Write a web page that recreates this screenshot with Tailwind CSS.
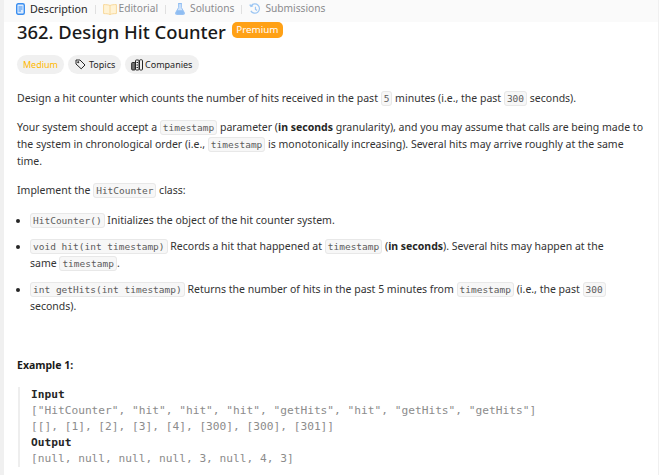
<!DOCTYPE html>
<html><head><meta charset="utf-8"><script src="https://cdn.jsdelivr.net/npm/@tailwindcss/browser@4"></script></head>
<body class="m-0 bg-[#f0f0f0] font-['Noto_Sans',sans-serif]">
<div class="w-[659px] h-[475px] overflow-hidden pl-1 pr-px">
<div class="h-full bg-white">
<div class="h-[22px] bg-[#fafafa] flex items-center pl-[12px] text-[10.200px] text-[#8a8a8e] pb-1">
  <svg class="w-[9px] h-[12px] mr-[5px]" viewBox="0 0 9 12"><rect x="0.700" y="0.700" width="7.600" height="10.600" rx="1.500" fill="#dbeafe" stroke="#3b8ff0" stroke-width="1.400"/><path d="M2.500 4h4M2.500 6h4M2.500 8h2.500" stroke="#3b8ff0"/></svg>
  <span class="text-[#262626] text-[10.700px]">Description</span>
  <span class="w-px h-[9px] bg-[#e0e0e0] ml-[7px] mr-[7px]"></span>
  <svg class="w-[14px] h-[11px] mr-[2px]" viewBox="0 0 14 11" fill="#fff3d6" stroke="#f8d89a"><path d="M7 1.500C5.500.7 3 .6.600.6v9c2.400 0 4.900.1 6.400 1 1.500-.9 4-1 6.400-1v-9C11 .6 8.500.7 7 1.500zM7 1.500v9"/></svg>
  <span>Editorial</span>
  <span class="w-px h-[9px] bg-[#e0e0e0] ml-[7px] mr-[9px]"></span>
  <svg class="w-[10px] h-[12px] mr-[5px]" viewBox="0 0 11 13"><path d="M3.500.5h4M4 .5v4.300L.6 10.800c-.5 1 .1 1.700 1 1.700h7.800c.9 0 1.500-.7 1-1.700L7 4.800V.5z" fill="#cfe3fb" stroke="#8fbdf2"/><path d="M2.200 8h6.600l1.300 3-.6 1H1.500l-.6-1z" fill="#8fbdf2"/></svg>
  <span>Solutions</span>
  <span class="w-px h-[9px] bg-[#e0e0e0] ml-[7px] mr-[7px]"></span>
  <svg class="w-[12px] h-[12px] mr-[4px]" viewBox="0 0 13 12" fill="none" stroke="#9cc6f3" stroke-width="1.300"><path d="M2.300 2.500A5 5 0 1 1 2 8"/><path d="M.800 1.200l1.400 2.200 2.300-.9" fill="#9cc6f3"/><path d="M7 3.500v3l1.800 1"/></svg>
  <span>Submissions</span>
</div>
<div class="pl-[13px] pr-[14px]">
<div class="flex items-start -mt-px h-[22px]">
  <h1 class="text-[18.400px] leading-[22px] font-medium text-[#1a1a1a]">362. Design Hit Counter</h1>
  <span class="ml-[6px] mt-px h-[16px] w-[51px] text-center rounded-[5px] bg-[#ffa116] text-white text-[9.800px] leading-[15px]">Premium</span>
</div>
<div class="flex gap-1 mt-[12px] text-[9px] leading-[19px] h-[19px]">
  <span class="rounded-full bg-[#f0f0f0] w-[47px] text-center text-[#ffb800]">Medium</span>
  <span class="rounded-full bg-[#f0f0f0] w-[53px] pl-[7px] text-[#262626] flex items-center gap-[3px]"><svg class="w-[11px] h-[11px]" viewBox="0 0 11 11" fill="none" stroke="#262626"><path d="M1 1h4l5 5-3.800 3.800L1 5z" stroke-linejoin="round"/><circle cx="3.200" cy="3.200" r=".6" fill="#262626"/></svg>Topics</span>
  <span class="rounded-full bg-[#f0f0f0] w-[74px] pl-[6px] text-[#262626] flex items-center gap-[2px]"><svg class="w-[12px] h-[12px]" viewBox="0 0 12 12" fill="none" stroke="#262626"><rect x=".7" y="3.500" width="3.500" height="7.500" rx=".8" fill="#777"/><rect x="4.500" y="1" width="3.500" height="10" rx=".8"/><rect x="8.500" y=".8" width="3" height="10.200" rx=".8"/><path d="M5.500 3.500h1.500M5.500 6h1.500M5.500 8.500h1.500" /></svg>Companies</span>
</div>
<div class="mt-[16px] text-[10.500px] leading-[16.670px] text-[#333333]">
<p>Design a hit counter which counts the number of hits received in the past <code class="font-['DejaVu_Sans_Mono',monospace] text-[9.500px] leading-none text-[#5c5c5c] bg-[#f7f7f7] border border-[#e8e8e8] rounded-[3px] px-[2px] py-px">5</code> minutes (i.e., the past <code class="font-['DejaVu_Sans_Mono',monospace] text-[9.500px] leading-none text-[#5c5c5c] bg-[#f7f7f7] border border-[#e8e8e8] rounded-[3px] px-[2px] py-px">300</code> seconds).</p>
<p class="mt-[12.670px]">Your system should accept a <code class="font-['DejaVu_Sans_Mono',monospace] text-[9.500px] leading-none text-[#5c5c5c] bg-[#f7f7f7] border border-[#e8e8e8] rounded-[3px] px-[2px] py-px">timestamp</code> parameter (<strong class="font-bold text-[#262626]">in seconds</strong> granularity), and you may assume that calls are being made to the system in chronological order (i.e., <code class="font-['DejaVu_Sans_Mono',monospace] text-[9.500px] leading-none text-[#5c5c5c] bg-[#f7f7f7] border border-[#e8e8e8] rounded-[3px] px-[2px] py-px">timestamp</code> is monotonically increasing). Several hits may arrive roughly at the same time.</p>
<p class="mt-[12.670px]">Implement the <code class="font-['DejaVu_Sans_Mono',monospace] text-[9.500px] leading-none text-[#5c5c5c] bg-[#f7f7f7] border border-[#e8e8e8] rounded-[3px] px-[2px] py-px">HitCounter</code> class:</p>
<ul class="mt-[13.300px] pl-[13px] pr-[14px] list-disc marker:text-[#262626]">
<li><code class="font-['DejaVu_Sans_Mono',monospace] text-[9.500px] leading-none text-[#5c5c5c] bg-[#f7f7f7] border border-[#e8e8e8] rounded-[3px] px-[2px] py-px">HitCounter()</code> Initializes the object of the hit counter system.</li>
<li class="mt-[9.700px]"><code class="font-['DejaVu_Sans_Mono',monospace] text-[9.500px] leading-none text-[#5c5c5c] bg-[#f7f7f7] border border-[#e8e8e8] rounded-[3px] px-[2px] py-px">void hit(int timestamp)</code> Records a hit that happened at <code class="font-['DejaVu_Sans_Mono',monospace] text-[9.500px] leading-none text-[#5c5c5c] bg-[#f7f7f7] border border-[#e8e8e8] rounded-[3px] px-[2px] py-px">timestamp</code> (<strong class="font-bold text-[#262626]">in seconds</strong>). Several hits may happen at the same <code class="font-['DejaVu_Sans_Mono',monospace] text-[9.500px] leading-none text-[#5c5c5c] bg-[#f7f7f7] border border-[#e8e8e8] rounded-[3px] px-[2px] py-px">timestamp</code>.</li>
<li class="mt-[9.700px]"><code class="font-['DejaVu_Sans_Mono',monospace] text-[9.500px] leading-none text-[#5c5c5c] bg-[#f7f7f7] border border-[#e8e8e8] rounded-[3px] px-[2px] py-px">int getHits(int timestamp)</code> Returns the number of hits in the past 5 minutes from <code class="font-['DejaVu_Sans_Mono',monospace] text-[9.500px] leading-none text-[#5c5c5c] bg-[#f7f7f7] border border-[#e8e8e8] rounded-[3px] px-[2px] py-px">timestamp</code> (i.e., the past <code class="font-['DejaVu_Sans_Mono',monospace] text-[9.500px] leading-none text-[#5c5c5c] bg-[#f7f7f7] border border-[#e8e8e8] rounded-[3px] px-[2px] py-px">300</code> seconds).</li>
</ul>
<p class="mt-[42.500px] font-bold text-[#1a1a1a]">Example 1:</p>
<div class="mt-[13px] ml-px border-l-2 border-[#eeeeee] pl-[11px] font-['DejaVu_Sans_Mono',monospace] text-[11.200px] leading-[16px] text-[#8c8c8c] whitespace-pre"><div class="font-bold text-[#262626]">Input</div><div>["HitCounter", "hit", "hit", "hit", "getHits", "hit", "getHits", "getHits"]</div><div>[[], [1], [2], [3], [4], [300], [300], [301]]</div><div class="font-bold text-[#262626]">Output</div><div>[null, null, null, null, 3, null, 4, 3]</div></div>
</div>
</div>
</div>
</div>
</body></html>
